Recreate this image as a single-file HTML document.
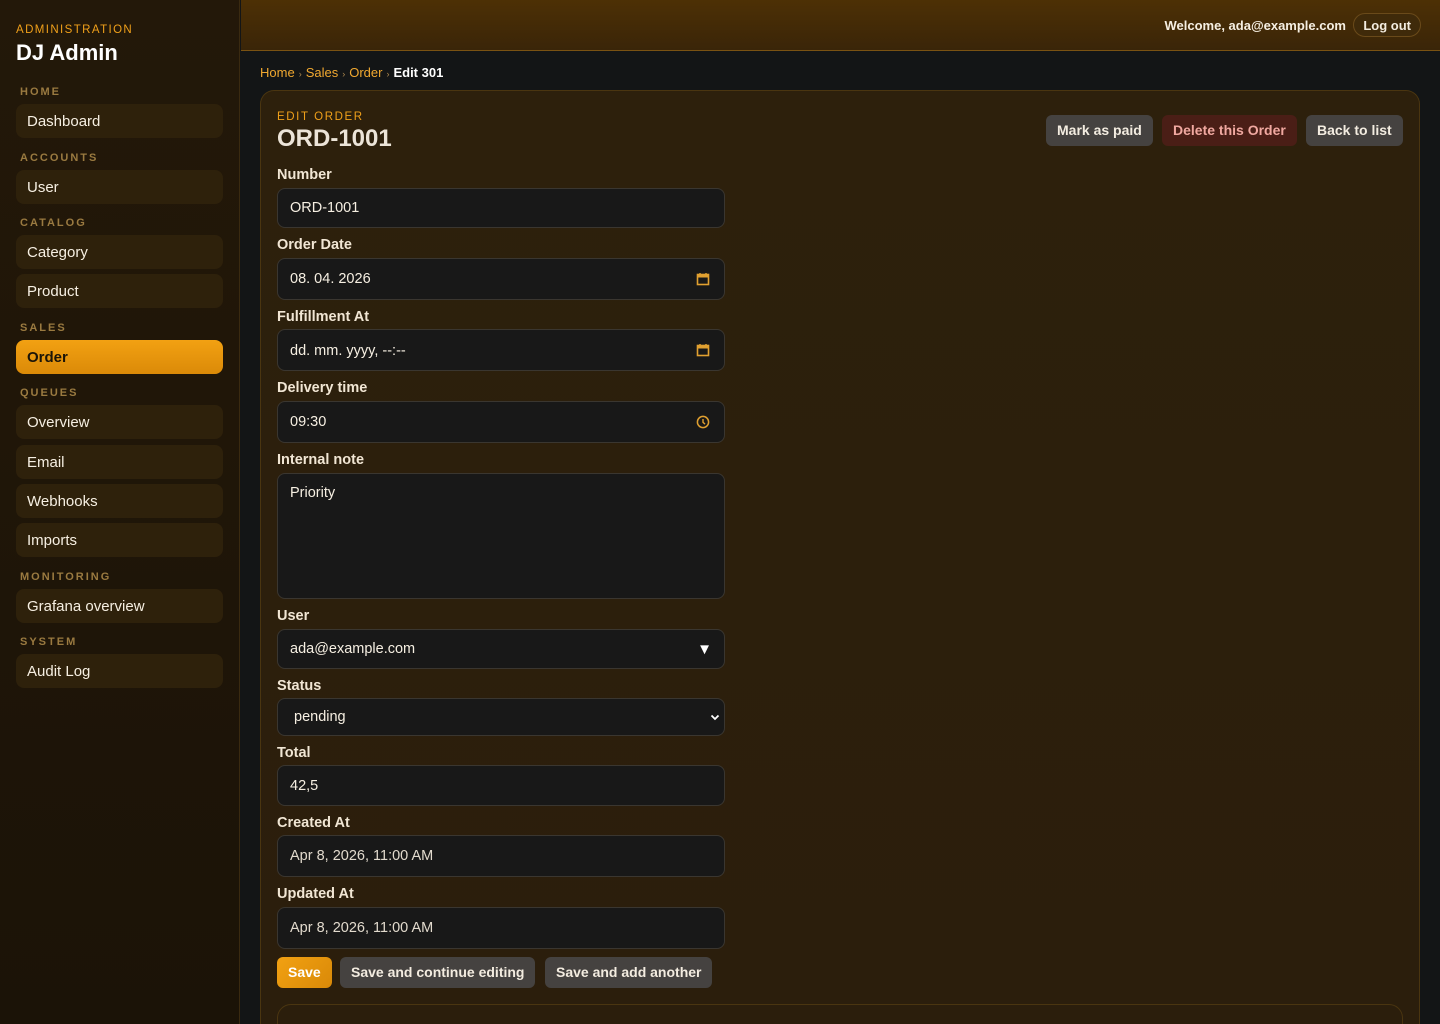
<!DOCTYPE html>
<html><head><meta charset="utf-8"><style>
*{box-sizing:border-box;margin:0;padding:0}
html,body{width:1440px;height:1024px;overflow:hidden}
body{background:#131516;font-family:"Liberation Sans",sans-serif;color:#f3ece0;position:relative}
.side{position:absolute;left:0;top:0;width:240px;height:1024px;background:linear-gradient(180deg,#231809,#1b1307);border-right:1px solid #3a2a10}
.adm{position:absolute;left:16px;top:24px;font-size:11.5px;letter-spacing:1.4px;color:#f0a01a}
.brand{position:absolute;left:16px;top:40px;font-size:22px;font-weight:bold;color:#fff}
.sec{position:absolute;left:20px;font-size:11px;font-weight:bold;letter-spacing:2px;color:#9a7a40}
.it{position:absolute;left:16px;width:207px;height:34px;border-radius:8px;background:#2e210b;font-size:15px;padding-left:11px;line-height:36px;color:#f6efe2}
.it.on{background:linear-gradient(180deg,#f2a112,#db8a08);color:#1a1408;font-weight:bold}
.top{position:absolute;left:241px;top:0;right:0;height:51px;background:linear-gradient(180deg,#4d3005,#3a2508);border-bottom:1px solid #7a5212}
.wel{position:absolute;right:94px;top:18px;font-size:13px;font-weight:bold;color:#f6efe2}
.lo{position:absolute;right:19px;top:13px;height:24px;padding:0 9px;border:1px solid #6a4a1a;border-radius:12px;font-size:13px;font-weight:bold;line-height:24px;background:#3f2a0a}
.bc{position:absolute;left:260px;top:65px;font-size:13px;color:#f0a830}
.bc b{color:#fff}
.bc i{font-style:normal;font-size:9px;color:#b08a50;margin:0 4px}
.card{position:absolute;left:260px;top:90px;width:1160px;height:934px;border:1px solid #4a3510;border-bottom:none;border-radius:14px 14px 0 0;background:linear-gradient(180deg,#2d200c,#2b1e0c)}
.eo{position:absolute;left:277px;top:111px;font-size:11.5px;letter-spacing:1.6px;color:#f0a01a}
h1{position:absolute;left:277px;top:125px;font-size:24px;color:#ece4d8}
.btn{position:absolute;height:31px;border-radius:6px;font-size:14px;font-weight:bold;line-height:31px;padding:0 11px;background:#454240;color:#f3ece0}
.lab{position:absolute;left:277px;font-size:14.5px;font-weight:bold;color:#f1e6d4}
.inp{position:absolute;left:277px;width:448px;border:1px solid #3a3630;border-radius:8px;background:#181818;font-size:14.5px;padding-left:12px;color:#f6efe2}
.ic{position:absolute;right:14px}
.pan{position:absolute;left:277px;top:1004px;width:1126px;height:40px;border:1px solid #4a3510;border-radius:14px}
</style></head><body>
<div class="side">
<div class="adm">ADMINISTRATION</div>
<div class="brand">DJ Admin</div>
<div class="sec" style="top:86px">HOME</div>
<div class="it" style="top:104px">Dashboard</div>
<div class="sec" style="top:152px">ACCOUNTS</div>
<div class="it" style="top:170px">User</div>
<div class="sec" style="top:217px">CATALOG</div>
<div class="it" style="top:235px">Category</div>
<div class="it" style="top:274px">Product</div>
<div class="sec" style="top:322px">SALES</div>
<div class="it on" style="top:340px">Order</div>
<div class="sec" style="top:387px">QUEUES</div>
<div class="it" style="top:405px">Overview</div>
<div class="it" style="top:445px">Email</div>
<div class="it" style="top:484px">Webhooks</div>
<div class="it" style="top:523px">Imports</div>
<div class="sec" style="top:571px">MONITORING</div>
<div class="it" style="top:589px">Grafana overview</div>
<div class="sec" style="top:636px">SYSTEM</div>
<div class="it" style="top:654px">Audit Log</div>
</div>
<div class="top"><div class="wel">Welcome, ada@example.com</div><div class="lo">Log out</div></div>
<div class="bc">Home<i>›</i>Sales<i>›</i>Order<i>›</i><b>Edit 301</b></div>
<div class="card"></div>
<div class="eo">EDIT ORDER</div>
<h1>ORD-1001</h1>
<div class="btn" style="left:1046px;top:115px">Mark as paid</div>
<div class="btn" style="left:1162px;top:115px;background:#4a1e16;color:#f0a8a0">Delete this Order</div>
<div class="btn" style="left:1306px;top:115px">Back to list</div>

<div class="lab" style="top:167px">Number</div>
<div class="inp" style="top:188px;height:40px;line-height:39px">ORD-1001</div>
<div class="lab" style="top:237px">Order Date</div>
<div class="inp" style="top:258px;height:42px;line-height:41px">08. 04. 2026<svg class="ic" style="top:13px" width="14" height="14" viewBox="0 0 14 14"><rect x="1.5" y="2.5" width="11" height="10" fill="none" stroke="#e0a030" stroke-width="1.6"/><rect x="1.5" y="2.5" width="11" height="3" fill="#e0a030"/><path d="M4 1v2M10 1v2" stroke="#e0a030" stroke-width="1.4"/></svg></div>
<div class="lab" style="top:309px">Fulfillment At</div>
<div class="inp" style="top:329px;height:42px;line-height:42px">dd. mm. yyyy, --:--<svg class="ic" style="top:13px" width="14" height="14" viewBox="0 0 14 14"><rect x="1.5" y="2.5" width="11" height="10" fill="none" stroke="#e0a030" stroke-width="1.6"/><rect x="1.5" y="2.5" width="11" height="3" fill="#e0a030"/><path d="M4 1v2M10 1v2" stroke="#e0a030" stroke-width="1.4"/></svg></div>
<div class="lab" style="top:380px">Delivery time</div>
<div class="inp" style="top:401px;height:42px;line-height:41px">09:30<svg class="ic" style="top:13px" width="14" height="14" viewBox="0 0 14 14"><circle cx="7" cy="7" r="5.6" fill="none" stroke="#e0a030" stroke-width="1.5"/><path d="M7 4v3.3l2 1.8" fill="none" stroke="#e0a030" stroke-width="1.4"/></svg></div>
<div class="lab" style="top:452px">Internal note</div>
<div class="inp" style="top:473px;height:126px;padding-top:11px">Priority</div>
<div class="lab" style="top:608px">User</div>
<div class="inp" style="top:629px;height:40px;line-height:39px">ada@example.com<span style="position:absolute;right:12px;top:0;font-size:15px;color:#fff">▼</span></div>
<div class="lab" style="top:678px">Status</div>
<div class="inp" style="top:698px;height:38px;line-height:37px;padding-left:16px">pending<svg style="position:absolute;right:4px;top:15px" width="10" height="7" viewBox="0 0 10 7"><path d="M1.5 1.5l3.5 3.5 3.5-3.5" fill="none" stroke="#fff" stroke-width="1.8"/></svg></div>
<div class="lab" style="top:745px">Total</div>
<div class="inp" style="top:765px;height:41px;line-height:40px">42,5</div>
<div class="lab" style="top:815px">Created At</div>
<div class="inp" style="top:835px;height:42px;line-height:41px;color:#e2dacd">Apr 8, 2026, 11:00 AM</div>
<div class="lab" style="top:886px">Updated At</div>
<div class="inp" style="top:907px;height:42px;line-height:41px;color:#e2dacd">Apr 8, 2026, 11:00 AM</div>
<div class="btn" style="left:277px;top:957px;background:linear-gradient(135deg,#f2a112,#d98908);color:#fff">Save</div>
<div class="btn" style="left:340px;top:957px">Save and continue editing</div>
<div class="btn" style="left:545px;top:957px">Save and add another</div>
<div class="pan"></div>
</body></html>
